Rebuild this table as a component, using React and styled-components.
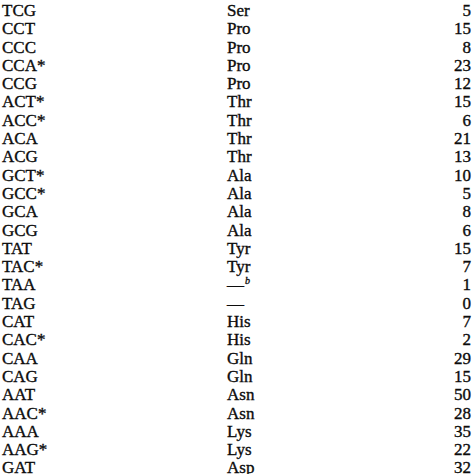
import React from "react";
import styled, { createGlobalStyle } from "styled-components";

const Global = createGlobalStyle`
  html, body { margin: 0; padding: 0; background: #fff; overflow: hidden; }
  body { font-family: "Liberation Serif", "Times New Roman", serif; color: #0c0c0c; }
`;

const Table = styled.div`
  display: grid;
  grid-template-columns: 225px 1fr 60px;
  grid-auto-rows: 18.3px;
  padding: 2px 3px 0 2px;
  font-size: 17px;
  line-height: 18.3px;
  width: 474px;
  box-sizing: border-box;
  -webkit-text-stroke: 0.35px #0c0c0c;
`;

const Cell = styled.div`
  white-space: nowrap;
  text-align: ${(p) => (p.$right ? "right" : "left")};
`;

const Sup = styled.sup`
  font-style: italic;
  font-size: 10px;
  line-height: 0;
  vertical-align: 6px;
  margin-left: 1px;
`;

const rows = [
  ["TCG", "Ser", "5"],
  ["CCT", "Pro", "15"],
  ["CCC", "Pro", "8"],
  ["CCA*", "Pro", "23"],
  ["CCG", "Pro", "12"],
  ["ACT*", "Thr", "15"],
  ["ACC*", "Thr", "6"],
  ["ACA", "Thr", "21"],
  ["ACG", "Thr", "13"],
  ["GCT*", "Ala", "10"],
  ["GCC*", "Ala", "5"],
  ["GCA", "Ala", "8"],
  ["GCG", "Ala", "6"],
  ["TAT", "Tyr", "15"],
  ["TAC*", "Tyr", "7"],
  ["TAA", "—", "1", "b"],
  ["TAG", "—", "0"],
  ["CAT", "His", "7"],
  ["CAC*", "His", "2"],
  ["CAA", "Gln", "29"],
  ["CAG", "Gln", "15"],
  ["AAT", "Asn", "50"],
  ["AAC*", "Asn", "28"],
  ["AAA", "Lys", "35"],
  ["AAG*", "Lys", "22"],
  ["GAT", "Asp", "32"],
];

export default function App() {
  return (
    <>
      <Global />
      <Table>
        {rows.map(([c, a, n, s], i) => (
          <React.Fragment key={i}>
            <Cell>{c}</Cell>
            <Cell>
              {a}
              {s && <Sup>{s}</Sup>}
            </Cell>
            <Cell $right>{n}</Cell>
          </React.Fragment>
        ))}
      </Table>
    </>
  );
}
